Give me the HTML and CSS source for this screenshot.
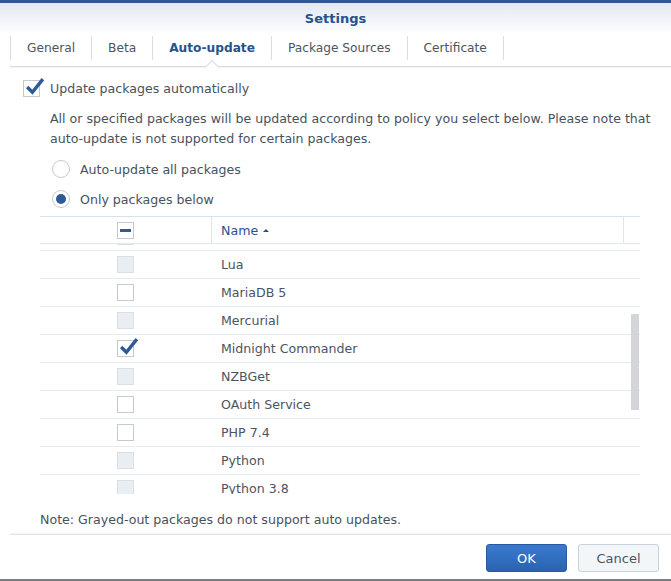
FILE: index.html
```html
<!DOCTYPE html>
<html>
<head>
<meta charset="utf-8">
<link rel="stylesheet" href="styles.css">
</head>
<body>
<div class="win">
  <div class="topbar"></div>
  <div class="titlebar">Settings</div>
  <div class="tabs">
    <div class="tab">General</div>
    <div class="tab">Beta</div>
    <div class="tab active">Auto-update</div>
    <div class="tab">Package Sources</div>
    <div class="tab">Certificate</div>
    <div class="tab-end"></div>
  </div>
  <div class="content">
    <div class="check-row">
      <span class="cb checked"><svg viewBox="0 0 20 20" class="tick"><path d="M3 10.5 L8 15.5 L18 3" fill="none" stroke="#2e5b97" stroke-width="3.2" stroke-linejoin="miter"/></svg></span>
      <span class="label">Update packages automatically</span>
    </div>
    <p class="desc">All or specified packages will be updated according to policy you select below. Please note that auto-update is not supported for certain packages.</p>
    <div class="radio-row"><span class="radio"></span><span class="label">Auto-update all packages</span></div>
    <div class="radio-row"><span class="radio on"></span><span class="label">Only packages below</span></div>
    <div class="grid">
      <div class="ghead">
        <div class="gc-check"><span class="cb partial"><span class="dash"></span></span></div>
        <div class="gc-name">Name <span class="sort"></span></div>
        <div class="gc-pad"></div>
      </div>
      <div class="gbody">
        <div class="rows">
          <div class="row"><div class="gc-check"><span class="cb dis"></span></div><div class="gc-name"></div></div>
          <div class="row"><div class="gc-check"><span class="cb dis"></span></div><div class="gc-name">Lua</div></div>
          <div class="row"><div class="gc-check"><span class="cb"></span></div><div class="gc-name">MariaDB 5</div></div>
          <div class="row"><div class="gc-check"><span class="cb dis"></span></div><div class="gc-name">Mercurial</div></div>
          <div class="row"><div class="gc-check"><span class="cb checked"><svg viewBox="0 0 20 20" class="tick"><path d="M3 10.5 L8 15.5 L18 3" fill="none" stroke="#2e5b97" stroke-width="3.2"/></svg></span></div><div class="gc-name">Midnight Commander</div></div>
          <div class="row"><div class="gc-check"><span class="cb dis"></span></div><div class="gc-name">NZBGet</div></div>
          <div class="row"><div class="gc-check"><span class="cb"></span></div><div class="gc-name">OAuth Service</div></div>
          <div class="row"><div class="gc-check"><span class="cb"></span></div><div class="gc-name">PHP 7.4</div></div>
          <div class="row"><div class="gc-check"><span class="cb dis"></span></div><div class="gc-name">Python</div></div>
          <div class="row"><div class="gc-check"><span class="cb dis"></span></div><div class="gc-name">Python 3.8</div></div>
        </div>
        <div class="scrollbar"></div>
      </div>
    </div>
    <div class="note">Note: Grayed-out packages do not support auto updates.</div>
  </div>
  <div class="footer">
    <button class="btn primary">OK</button>
    <button class="btn">Cancel</button>
  </div>
  <div class="bottom-edge"></div>
</div>
</body>
</html>
```
FILE: styles.css
```css
html, body {
  margin: 0;
  padding: 0;
  background: #ffffff;
}
body {
  width: 671px;
  height: 581px;
  overflow: hidden;
  font-family: "DejaVu Sans", Verdana, sans-serif;
  font-size: 12.6px;
  color: #48525e;
}
.win {
  display: flex;
  flex-direction: column;
  height: 581px;
}
.topbar {
  height: 3px;
  background: #2f5a90;
}
.titlebar {
  height: 32px;
  line-height: 32px;
  text-align: center;
  font-weight: bold;
  font-size: 13px;
  color: #27518b;
  background: linear-gradient(#e3e9f1, #ffffff);
}
.tabs {
  display: flex;
  margin-left: 10px;
  padding-top: 1px;
  height: 30px;
  border-bottom: 1px solid #d9dcdf;
  box-shadow: 0 1px 1px rgba(0,0,0,0.04);
  position: relative;
  font-size: 12.2px;
}
.tab {
  height: 24px;
  line-height: 24px;
  padding: 0 16px 0 16px;
  border-left: 1px solid #d7dee7;
  color: #4b5562;
  position: relative;
}
.tab-end {
  height: 24px;
  border-left: 1px solid #d7dee7;
}
.tab.active {
  font-weight: bold;
  color: #28528b;
}
.tab.active::after {
  content: "";
  position: absolute;
  left: 50%;
  bottom: -12px;
  width: 9px;
  height: 9px;
  margin-left: -5px;
  background: #fff;
  border-left: 1px solid #d9dcdf;
  border-top: 1px solid #d9dcdf;
  transform: rotate(45deg);
}
.content {
  padding: 13px 0 0 0;
  flex: 1;
}
.check-row {
  display: flex;
  align-items: center;
  margin-left: 23px;
  height: 17px;
}
.check-row .label {
  margin-left: 10px;
}
.cb {
  display: inline-block;
  box-sizing: border-box;
  width: 17px;
  height: 17px;
  border: 1px solid #c3cad3;
  background: #ffffff;
  position: relative;
  flex: none;
}
.cb.dis {
  background: #e9eef3;
  border-color: #d9dfe6;
}
.cb .tick {
  position: absolute;
  left: 0px;
  top: -5px;
  width: 21px;
  height: 21px;
}
.cb.partial .dash {
  position: absolute;
  left: 2px;
  top: 6px;
  width: 11px;
  height: 3px;
  background: #2e5b97;
}
.desc {
  margin: 12px 0 0 50px;
  width: 615px;
  line-height: 20px;
}
.radio-row {
  display: flex;
  align-items: center;
  margin-left: 52px;
  height: 18px;
  margin-top: 11px;
}
.radio-row + .radio-row {
  margin-top: 12px;
}
.radio-row .label {
  margin-left: 10px;
}
.radio {
  box-sizing: border-box;
  width: 18px;
  height: 18px;
  border-radius: 50%;
  border: 1px solid #c3cad3;
  background: #fff;
  position: relative;
  flex: none;
}
.radio.on::after {
  content: "";
  position: absolute;
  left: 3px;
  top: 3px;
  width: 10px;
  height: 10px;
  border-radius: 50%;
  background: #2e5b97;
}
.grid {
  margin: 8px 0 0 40px;
  width: 600px;
  border-top: 1px solid #d8e2ed;
}
.ghead {
  display: flex;
  height: 26px;
  border-bottom: 1px solid #e5e8eb;
}
.ghead .gc-check {
  border-right: 1px solid #dde5ee;
}
.ghead .gc-name {
  color: #28528b;
  flex: 1;
}
.gc-pad {
  width: 16px;
  border-left: 1px solid #dde5ee;
}
.gc-check {
  width: 172px;
  display: flex;
  align-items: center;
  justify-content: center;
  padding-right: 1px;
  box-sizing: border-box;
}
.gc-name {
  display: flex;
  align-items: center;
  padding-left: 9px;
}
.sort {
  display: inline-block;
  width: 0;
  height: 0;
  margin-left: 5px;
  border-left: 3px solid transparent;
  border-right: 3px solid transparent;
  border-bottom: 3px solid #28528b;
}
.gbody {
  height: 250px;
  overflow: hidden;
  position: relative;
}
.rows {
  margin-top: -21px;
}
.row {
  display: flex;
  height: 27px;
  border-bottom: 1px solid #e5eaef;
}
.row .gc-name {
  color: #4b5562;
}
.scrollbar {
  position: absolute;
  right: 1px;
  top: 70px;
  width: 8px;
  height: 96px;
  background: #d4d5d8;
}
.note {
  margin: 18px 0 0 40px;
}
.footer {
  margin-left: 10px;
  border-top: 1px solid #e1e3e5;
  box-shadow: 0 -1px 1px rgba(0,0,0,0.03);
  display: flex;
  justify-content: flex-end;
  gap: 11px;
  padding: 9px 12px 7px 0;
}
.btn {
  width: 81px;
  height: 28px;
  border-radius: 3px;
  font-family: "DejaVu Sans", Verdana, sans-serif;
  font-size: 13px;
  border: 1px solid #c8d1dc;
  background: #f3f6f9;
  color: #4a5562;
  padding: 0;
}
.btn.primary {
  background: linear-gradient(#3a7acd, #2a63b1);
  border-color: #2958a0;
  color: #ffffff;
}
.bottom-edge {
  height: 2px;
  background: #7a7d80;
  margin-top: auto;
}
```
